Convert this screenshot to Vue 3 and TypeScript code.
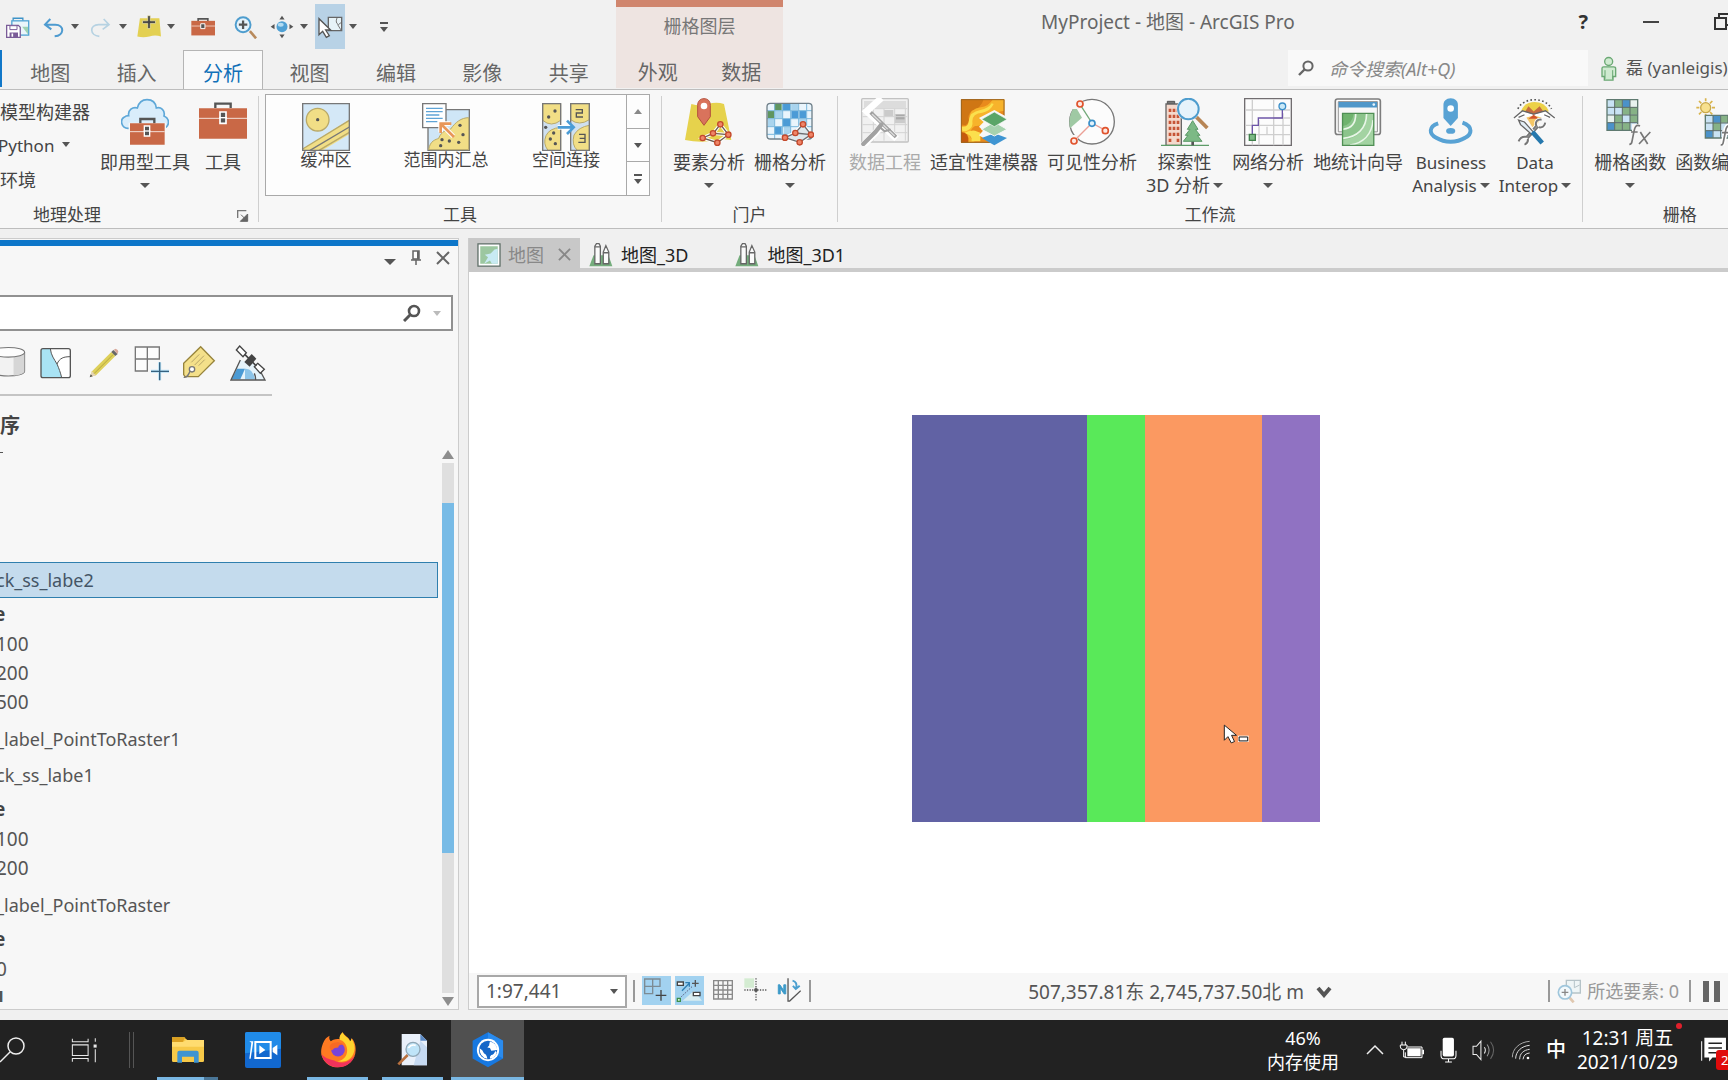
<script setup lang="ts">
import { ref } from 'vue'

interface RibbonItem {
  icon: string
  lines: string[]
  caret?: 'below' | 'inline'
  disabled?: boolean
  latin?: boolean
}

interface TreeRow {
  text: string
  kind: 'layer' | 'head' | 'value' | 'tail'
  selected?: boolean
}

const tabs = ['地图', '插入', '分析', '视图', '编辑', '影像', '共享']
const contextTabs = ['外观', '数据']
const activeTab = ref('分析')
const scale = ref('1:97,441')

const portal: RibbonItem[] = [
  { icon: 'feature', lines: ['要素分析'], caret: 'below' },
  { icon: 'rasterAnalysis', lines: ['栅格分析'], caret: 'below' },
]
const workflow: RibbonItem[] = [
  { icon: 'engineering', lines: ['数据工程'], disabled: true },
  { icon: 'suitability', lines: ['适宜性建模器'] },
  { icon: 'visibility', lines: ['可见性分析'] },
  { icon: 'explore3d', lines: ['探索性', '3D 分析'], caret: 'inline' },
  { icon: 'network', lines: ['网络分析'], caret: 'below' },
  { icon: 'geostat', lines: ['地统计向导'] },
  { icon: 'business', lines: ['Business', 'Analysis'], caret: 'inline', latin: true },
  { icon: 'interop', lines: ['Data', 'Interop'], caret: 'inline', latin: true },
]
const raster: RibbonItem[] = [
  { icon: 'rasterFx', lines: ['栅格函数'], caret: 'below' },
  { icon: 'fxEditor', lines: ['函数编辑器'] },
]
const readyTools: RibbonItem[] = [
  { icon: 'cloudTools', lines: ['即用型工具'], caret: 'below' },
  { icon: 'tools', lines: ['工具'] },
]
const groups = [
  { name: '门户', items: portal },
  { name: '工作流', items: workflow },
  { name: '栅格', items: raster },
]
const gallery = [
  { icon: 'buffer', name: '缓冲区' },
  { icon: 'summarize', name: '范围内汇总' },
  { icon: 'join', name: '空间连接' },
]

const rows: TreeRow[] = [
  { text: 'ck_ss_labe2', kind: 'layer', selected: true },
  { text: 'e', kind: 'head' },
  { text: '100', kind: 'value' },
  { text: '200', kind: 'value' },
  { text: '500', kind: 'value' },
  { text: '_label_PointToRaster1', kind: 'layer' },
  { text: 'ck_ss_labe1', kind: 'layer' },
  { text: 'e', kind: 'head' },
  { text: '100', kind: 'value' },
  { text: '200', kind: 'value' },
  { text: '_label_PointToRaster', kind: 'layer' },
  { text: 'e', kind: 'head' },
  { text: '0', kind: 'value' },
  { text: 'ı', kind: 'tail' },
]

const bands = [
  { color: '#6162a4', share: 175 },
  { color: '#59e959', share: 58 },
  { color: '#fb9961', share: 117 },
  { color: '#9072c2', share: 58 },
]

const docTabs = ['地图_3D', '地图_3D1']

const glyphs: Record<string, { box: string; body: string }> = {
  save: {
    box: '18 42 74 74',
    body: '<path d="M40 60v-8h30v8" fill="none" stroke="#3e93c8" stroke-width="4"/><rect x="36" y="60" width="52" height="44" fill="#eaf6fb" stroke="#4ea3d4" stroke-width="4"/><path d="M68 78l18 24V78z" fill="#9fd3b4"/><path d="M20 74h36l6 6v31H20z" fill="#fff" stroke="#7a5c98" stroke-width="4"/><path d="M30 75h22v12H30z" fill="#fff" stroke="#7a5c98" stroke-width="3"/><path d="M29 96h26v14H29z" fill="#7a5c98"/><path d="M35 99h5v10h-5z" fill="#fff"/>',
  },
  undo: {
    box: '126 44 72 72',
    body: '<path d="M154 56L138 73l19 14M139 73h30c28 1 28 32-2 35" fill="none" stroke="#4e9bd0" stroke-width="6"/>',
  },
  redo: {
    box: '270 44 72 72',
    body: '<path d="M314 56l16 17-19 14M329 73h-30c-28 1-28 32 2 35" fill="none" stroke="#b6d2e2" stroke-width="5"/>',
  },
  addData: {
    box: '413 44 74 74',
    body: '<path d="M422 54h60l5 56q-18-6-36 0-18 5-37 0z" fill="#e3d052"/><path d="M446 46h8v16h16v8h-16v16h-8V70h-16v-8h16z" fill="#444" stroke="#f5ecb0" stroke-width="2"/>',
  },
  toolbox: {
    box: '575 44 74 74',
    body: '<path d="M597 64v-8h30v8" fill="none" stroke="#555" stroke-width="5"/><path d="M576 62h73v45h-73z" fill="#c96846"/><path d="M576 78h73" stroke="#f0c7b8" stroke-width="3"/><path d="M605 71h13v15h-13z" fill="#555" stroke="#fff" stroke-width="3"/>',
  },
  zoomIn: {
    box: '700 42 74 74',
    body: '<path d="M749 92l19 22" stroke="#b88a5c" stroke-width="8"/><circle cx="728" cy="72" r="23" fill="#e6f3fb" stroke="#4e9dce" stroke-width="6"/><path d="M728 59v26M715 72h26" stroke="#555" stroke-width="7"/>',
  },
  explore: {
    box: '809 44 74 74',
    body: '<circle cx="846" cy="80" r="17" fill="#4fa0d4"/><ellipse cx="842" cy="74" rx="9" ry="6" fill="#b3dcf2"/><path d="M846 46l8 12h-16zM846 116l8-12h-16zM811 80l12-8v16zM881 80l-12-8v16z" fill="#555"/>',
  },
  select: {
    box: '950 38 78 78',
    body: '<path d="M984 48h40v40h-40z" fill="#e7f3f8" stroke="#666" stroke-width="4"/><path d="M1010 50q-6 14 4 20l8-6M1012 70l10 16" fill="none" stroke="#777" stroke-width="3"/><path d="M956 52v48l11-10 11 18 9-5-11-17h15z" fill="#fff" stroke="#555" stroke-width="4"/>',
  },
  cloudTools: {
    box: '363 294 144 144',
    body: '<path d="M384 385c-20-1-25-25-12-33 6-5 14-5 14-5-3-17 12-27 26-23 4-15 14-25 29-25s26 9 28 25c14-4 27 7 23 24 12 5 14 15 13 22-2 11-11 14-18 14z" fill="#d9edfb" stroke="#5fa8d8" stroke-width="5"/><path d="M386 368h112v68H386z" fill="#f7f7f7"/><path d="M421 370v-13h42v13" fill="none" stroke="#555" stroke-width="7"/><path d="M390 370h104v64H390z" fill="#c96846"/><path d="M390 395h104" stroke="#f3e0d8" stroke-width="3"/><path d="M433 378h16v30h-16z" fill="#555" stroke="#fff" stroke-width="4"/><path d="M431 393h20" stroke="#fff" stroke-width="4"/>',
  },
  tools: {
    box: '597 294 144 144',
    body: '<path d="M646 324v-13h46v13" fill="none" stroke="#555" stroke-width="7"/><path d="M597 325h144v91H597z" fill="#c96846"/><path d="M597 355h144" stroke="#f3e0d8" stroke-width="3"/><path d="M660 336h18v34h-18z" fill="#555" stroke="#fff" stroke-width="5"/><path d="M657 353h24" stroke="#fff" stroke-width="4"/>',
  },
  buffer: {
    box: '909 309 144 144',
    body: '<path d="M911 311h140v140H911z" fill="#d4e8f7"/><circle cx="956" cy="359" r="34" fill="#f1de86" stroke="#b9a968" stroke-width="4"/><circle cx="956" cy="359" r="5" fill="#555"/><path d="M911 451v-4l140-88v44l-80 48z" fill="#f1de86"/><path d="M911 447l140-86M960 451l91-54" stroke="#b9a968" stroke-width="4"/><path d="M933 451l118-70" stroke="#777" stroke-width="4"/><path d="M911 311h140v140H911z" fill="none" stroke="#777" stroke-width="4"/>',
  },
  summarize: {
    box: '0 0 144 144',
    body: '<path d="M18 20h124v122H18z" fill="#cfe6f7" stroke="#777" stroke-width="4"/><path d="M20 140c4-28 22-30 30-34 10-24 22-22 36-28 14-20 32-34 54-34v96z" fill="#f1de86" stroke="#b9a968" stroke-width="3"/><path d="M2 2h70v72H2z" fill="#fff" stroke="#777" stroke-width="4"/><path d="M12 16h50M12 26h50M12 36h40M12 46h50M12 56h34" stroke="#5fa4d6" stroke-width="4"/><path d="M94 100L60 66M56 88V62h28" fill="none" stroke="#fff" stroke-width="14"/><path d="M96 102L60 66M56 90V62h32" fill="none" stroke="#e8975a" stroke-width="8"/><g fill="#555"><circle cx="114" cy="67" r="5"/><circle cx="123" cy="95" r="5"/><circle cx="60" cy="110" r="5"/><circle cx="82" cy="114" r="5"/><circle cx="110" cy="118" r="5"/><circle cx="56" cy="128" r="5"/></g>',
  },
  join: {
    box: '339 309 144 144',
    body: '<path d="M341 311h54v140h-54zM425 311h56v140h-56z" fill="#cfe0f0"/><path d="M341 311h54v50q-28 22-54 0zM395 382v69h-38q-16-20-6-44 10-22 44-25zM425 311h56v48q-30 20-56 0zM481 376v75h-36q-18-16-10-46 14-24 46-29z" fill="#f1de86" stroke="#b9a968" stroke-width="3"/><path d="M341 311h54v140h-54zM425 311h56v140h-56z" fill="none" stroke="#777" stroke-width="4"/><path d="M440 329h20v10h-18v12h20M450 403h18v24h-20M452 415h16" fill="none" stroke="#555" stroke-width="4"/><path d="M386 382h42" stroke="#fff" stroke-width="14"/><path d="M386 382h46M414 362l20 20-20 20" fill="none" stroke="#4b9cd6" stroke-width="8"/><g fill="#555"><circle cx="378" cy="333" r="5"/><circle cx="359" cy="351" r="5"/><circle cx="350" cy="382" r="5"/><circle cx="374" cy="399" r="5"/><circle cx="364" cy="417" r="5"/><circle cx="379" cy="431" r="5"/></g>',
  },
  feature: {
    box: '767 294 144 144',
    body: '<path d="M786 312q26 8 50 0 26-8 48 0l22 108q-34-6-68 4-34 4-71-4z" fill="#e6d24c"/><path d="M824 296c12 0 19 8 19 20v34l-19 26-19-26v-34c0-12 7-20 19-20z" fill="#d9735c" stroke="#b4503c" stroke-width="3"/><circle cx="824" cy="318" r="10" fill="#fff"/><path d="M820 414l32-14 21-27 24 31-33 24zM852 400l45 4" fill="none" stroke="#fff" stroke-width="10"/><path d="M820 414l32-14 21-27 24 31-33 24zM852 400l45 4" fill="none" stroke="#6c5d50" stroke-width="4"/><g fill="#ef8568" stroke="#c4492c" stroke-width="4"><circle cx="820" cy="414" r="8"/><circle cx="851" cy="400" r="8"/><circle cx="873" cy="373" r="8"/><circle cx="897" cy="404" r="8"/><circle cx="864" cy="428" r="8"/></g>',
  },
  rasterAnalysis: {
    box: '1008 294 144 144',
    body: '<rect x="1011" y="310" width="135" height="107" rx="10" fill="#eaf5fc"/><path d="M1013 333h20v22h-20zM1033 311h22v20h-22z" fill="#5f9560"/><path d="M1058 311h22v20h-22zM1084 333h20v22h-20zM1058 357h22v22h-22zM1033 380h22v22h-22zM1108 333h20v22h-20z" fill="#4b9bd6"/><path d="M1084 311h20v20h-20zM1034 333h22v22h-22zM1108 357h20v20h-20zM1013 357h20v22h-20zM1062 381h20v22h-20z" fill="#a9d4ee"/><path d="M1034 311v106M1058 311v106M1082 311v106M1106 311v106M1130 311v106M1011 332h135M1011 356h135M1011 380h135M1011 403h135" stroke="#79b7dc" stroke-width="3"/><rect x="1011" y="310" width="135" height="107" rx="10" fill="none" stroke="#70808a" stroke-width="4"/><path d="M1065 413l31-14 23-26 24 31-34 23zM1096 399l47 5" fill="none" stroke="#fff" stroke-width="11"/><path d="M1065 413l31-14 23-26 24 31-34 23zM1096 399l47 5" fill="#dfe8ec" stroke="#6c6d70" stroke-width="4"/><g fill="#ef8568" stroke="#c4492c" stroke-width="4"><circle cx="1065" cy="413" r="8"/><circle cx="1096" cy="399" r="8"/><circle cx="1119" cy="373" r="8"/><circle cx="1143" cy="404" r="8"/><circle cx="1109" cy="427" r="8"/></g>',
  },
  engineering: {
    box: '63 294 144 144',
    body: '<rect x="65" y="296" width="140" height="130" rx="3" fill="#f1f1f1" stroke="#c2c2c2" stroke-width="4"/><path d="M72 303h126v22H72z" fill="#dcdcdc"/><path d="M132 330h28v20h-28zM164 342h32v28h-32z" fill="#cbcbcb"/><path d="M168 344h26v14h-26z" fill="#a9a9a9"/><path d="M100 326v96M132 326v96M164 326v96M196 326v96M68 326h134M68 350h134M68 374h134M68 398h134" stroke="#d3d3d3" stroke-width="3"/><path d="M124 294L80 334l90 82M124 380l-52 54" fill="none" stroke="#fff" stroke-width="20"/><path d="M92 337l76 74" stroke="#a0a0a0" stroke-width="11"/><path d="M96 342l68 66" stroke="#dcdcdc" stroke-width="4"/><path d="M124 374l-18 22-36 36" fill="none" stroke="#a2a2a2" stroke-width="13" stroke-linecap="round"/><path d="M118 380l16 14 18-6" stroke="#a0a0a0" stroke-width="6" fill="none"/>',
  },
  suitability: {
    box: '361 294 144 144',
    body: '<path d="M364 298h130v130H364z" fill="#e98a1c"/><path d="M364 298h68q-8 28-36 34-14 14-8 30-8 20-24 10z" fill="#cf7614"/><path d="M494 298v34q-26 2-48 22-10 26-40 24-16 8-14 32 4 12 20 18h-48v-50q26 6 24-22 2-30 36-34 22-2 36-24z" fill="#f7b32b"/><path d="M462 312q-10 22-34 26-30 2-30 26 4 20-16 28-10 4-16-2v-10q20 4 22-20 2-24 34-30 24-4 34-20zM372 400q18-10 34-8l16 6v26h-26q2-22-24-24z" fill="#fbe04d"/><path d="M364 396q26 0 22 32h-22z" fill="#c5590d"/><path d="M365 299h128v128H365z" fill="none" stroke="#9c6420" stroke-width="3"/><path d="M464 330l48 26-12 12 12 14-12 10 12 12v32h-46l-48-30 12-14-12-12 14-14-14-12z" fill="#f7f7f7"/><path d="M464 400l38 14-38 22-38-22z" fill="#3f95d2"/><path d="M464 366l38 22-38 20-38-20z" fill="#a6d2ae" stroke="#f7f7f7" stroke-width="3"/><path d="M464 336l38 22-38 22-38-22z" fill="#5aa567" stroke="#f7f7f7" stroke-width="2"/>',
  },
  visibility: {
    box: '682 293 144 144',
    body: '<circle cx="754" cy="364" r="67" fill="#fcfcfc" stroke="#777" stroke-width="4"/><path d="M704 318l20 34-36 32q-8-40 16-66z" fill="#9fc9a4"/><path d="M690 300h30v26h-30zM682 404h30v28h-30z" fill="#f7f7f7"/><path d="M718 312l36 56" stroke="#71a878" stroke-width="4"/><path d="M754 368l40 22M754 368l-54 54" stroke="#eba096" stroke-width="4"/><circle cx="754" cy="369" r="9" fill="#e3f3fc" stroke="#3b8fc9" stroke-width="5"/><g fill="#fce8e2" stroke="#e0532d" stroke-width="5"><circle cx="718" cy="311" r="9"/><circle cx="700" cy="422" r="9"/><circle cx="794" cy="391" r="9"/></g>',
  },
  explore3d: {
    box: '963 294 144 144',
    body: '<path d="M982 312v-8h22v8z" fill="#777" stroke="#555" stroke-width="3"/><path d="M978 312h46v124h-46z" fill="#f4d9cd" stroke="#666" stroke-width="4"/><g fill="#c65436"><path d="M986 326h8v10h-8zM998 326h8v10h-8zM1010 326h8v10h-8zM986 344h8v10h-8zM998 344h8v10h-8zM1010 344h8v10h-8zM986 362h8v10h-8zM998 362h8v10h-8zM1010 362h8v10h-8zM986 380h8v10h-8zM998 380h8v10h-8zM1010 380h8v10h-8zM986 398h8v10h-8zM998 398h8v10h-8zM1010 398h8v10h-8zM986 416h8v10h-8zM1010 416h8v10h-8z"/></g><path d="M963 436h144" stroke="#5d9b68" stroke-width="4"/><path d="M1058 420v16" stroke="#555" stroke-width="8"/><path d="M1058 362l16 26h-8l14 18h-8l14 18h-56l14-18h-8l14-18h-8z" fill="#7cb985" stroke="#5d9b68" stroke-width="3"/><path d="M1068 350l34 34" stroke="#b78555" stroke-width="11"/><circle cx="1045" cy="327" r="35" fill="#f7f7f7"/><circle cx="1045" cy="327" r="31" fill="#e6f3fb" stroke="#4e9dce" stroke-width="6"/>',
  },
  network: {
    box: '1215 294 144 144',
    body: '<path d="M1217 296h140v140h-140z" fill="#fcfcfc" stroke="#716d70" stroke-width="4"/><path d="M1240 298v138M1260 360v76M1304 298v138M1332 340v96M1284 380v26M1219 330h136M1219 376h136M1219 404h136M1304 354h51" stroke="#cfcfcf" stroke-width="4"/><path d="M1240 410v-34h18v-22h72v-32" fill="none" stroke="#6d55a8" stroke-width="4"/><circle cx="1330" cy="319" r="10" fill="#c9e9f8" stroke="#3b8fc9" stroke-width="4"/><path d="M1231 403h18v18h-18z" fill="#7cb985" stroke="#3f7f4a" stroke-width="4"/>',
  },
  geostat: {
    box: '200 293 144 146',
    body: '<rect x="203" y="296" width="137" height="108" rx="7" fill="#fff" stroke="#7d7d7d" stroke-width="5"/><path d="M212 304h119v92H212z" fill="#f7f7f7" stroke="#8f8f8f" stroke-width="3"/><path d="M213 305h117v17H213z" fill="#4f97c9"/><circle cx="320" cy="313" r="4" fill="#e8f5fc"/><path d="M225 340h95v97h-95z" fill="#a3d3a2"/><path d="M225 340h74c0 52-32 78-74 80z" fill="#8bc48b"/><path d="M225 340h34q-4 34-34 38z" fill="#6fb36e"/><path d="M265 342c0 28-14 44-38 46M298 342c0 44-28 70-72 74M318 360c-4 44-30 70-70 76" fill="none" stroke="#e9f6e8" stroke-width="5"/><path d="M225 340h95v97h-95z" fill="none" stroke="#4f8f54" stroke-width="4"/>',
  },
  business: {
    box: '479 293 144 146',
    body: '<path d="M586 368c34 12 28 36 8 46-26 16-62 16-88 0-22-12-24-34 6-44" fill="none" stroke="#58a2d4" stroke-width="12"/><path d="M550 294c14 0 22 9 22 20v40l-22 24-22-24v-40c0-11 8-20 22-20z" fill="#58a2d4"/><circle cx="550" cy="325" r="10" fill="#fff"/><ellipse cx="550" cy="393" rx="14" ry="9" fill="#58a2d4"/>',
  },
  interop: {
    box: '732 293 144 146',
    body: '<path d="M752 326c16-36 84-38 102 0" fill="none" stroke="#555" stroke-width="5" stroke-dasharray="5 7"/><path d="M762 334c8-38 72-38 84 0l-42 4z" fill="#ecd148"/><path d="M772 338l12-20 16 16 18-16 14 20-14 8h-30z" fill="#c46b40"/><path d="M738 356l28-24 34 12 36-12 30 24-32-4-34 4-30-4z" fill="#fff"/><path d="M740 354l26-22 34 10 36-10 28 22M754 352l18-8M850 352l-18-8" fill="none" stroke="#666" stroke-width="4"/><path d="M778 352l22 36 24-36-24-6z" fill="#f5c766"/><path d="M784 356l16-12 16 12z" fill="#d2532c"/><path d="M824 358c-14-2-20 8-16 18l-32 36c-10-2-18 2-22 12M772 436c10-4 14-12 12-20l32-34c8 4 18-2 20-12" fill="none" stroke="#fff" stroke-width="10"/><path d="M824 359c-14-2-20 8-16 18l-30 34c-12-2-20 4-24 14M772 435c8-4 12-10 10-18M816 382c10 2 18-4 19-14M814 380l-32 36" fill="none" stroke="#777" stroke-width="6"/><path d="M756 364l14 4 32 34" fill="none" stroke="#fff" stroke-width="13"/><path d="M754 360l18 6 30 34-8 4-34-30z" fill="#e3eef6" stroke="#666" stroke-width="4"/><path d="M796 396l30 34" stroke="#2678ad" stroke-width="14"/>',
  },
  rasterFx: {
    box: '1016 294 144 144',
    body: '<path d="M1019 299h92v92h-92z" fill="#c9e3f4"/><path d="M1042 299h22v22h-22zM1066 322h22v22h-22zM1088 322h22v22h-22zM1042 345h22v22h-22zM1088 345h22v22h-22zM1042 368h22v22h-22zM1066 368h22v22h-22z" fill="#86b286"/><path d="M1066 299h22v22h-22zM1019 368h22v22h-22z" fill="#4b92c9"/><path d="M1088 299h22v22h-22zM1019 345h22v22h-22z" fill="#e8f2ee"/><path d="M1042 299v92M1065 299v92M1088 299v92M1019 322h92M1019 345h92M1019 368h92" stroke="#5b6a66" stroke-width="3"/><path d="M1019 299h92v92h-92z" fill="none" stroke="#5f7a70" stroke-width="4"/><path d="M1094 372h26v30h-26z" fill="#f7f7f7"/><path d="M1118 378c-12-6-16 4-18 16l-6 30c-1 8-4 9-8 9M1091 396h20M1119 396l22 36M1149 396l-34 36" fill="none" stroke="#777" stroke-width="5"/>',
  },
  fxEditor: {
    box: '1284 294 144 144',
    body: '<circle cx="1313" cy="323" r="15" fill="#f7e08e" stroke="#c9a94c" stroke-width="4"/><path d="M1313 295v9M1313 342v9M1285 323h9M1332 323h9M1293 303l7 7M1333 303l-7 7M1293 343l7-7M1333 343l-7-7" stroke="#d9b44c" stroke-width="5"/><path d="M1312 346h92v68h-92z" fill="#c9e3f4"/><path d="M1335 369h22v22h-22zM1358 346h22v22h-22zM1380 369h22v22h-22z" fill="#86b286"/><path d="M1312 392h22v22h-22zM1335 346h22v22h-22z" fill="#4b92c9"/><path d="M1335 346v68M1358 346v68M1380 346v68M1312 369h92M1312 392h92" stroke="#5b6a66" stroke-width="3"/><path d="M1312 346h92v68h-92z" fill="none" stroke="#5f7a70" stroke-width="4"/><path d="M1392 380c-14-8-18 2-20 16l-6 30c-1 8-5 10-8 8M1362 398h22" fill="none" stroke="#fff" stroke-width="14"/><path d="M1392 380c-14-8-18 2-20 16l-6 30c-1 8-5 10-8 8M1362 398h22" fill="none" stroke="#777" stroke-width="5"/>',
  },
  search: {
    box: '0 0 16 16',
    body: '<circle cx="10" cy="6" r="4.600" fill="none" stroke="#666" stroke-width="2"/><path d="M7 9l-6 6" stroke="#666" stroke-width="2.400"/>',
  },
  searchBold: {
    box: '0 0 18 18',
    body: '<circle cx="11" cy="7" r="5" fill="none" stroke="#555" stroke-width="2.600"/><path d="M8 10l-7 7" stroke="#555" stroke-width="3"/>',
  },
  person: {
    box: '1000 166 48 74',
    body: '<circle cx="1023" cy="182" r="12" fill="#cfead0" stroke="#6aa873" stroke-width="4"/><path d="M1003 202q0-4 5-4h30q6 0 6 5v24h-8v11h-26v-11h-7z" fill="#cfead0" stroke="#6aa873" stroke-width="4"/><path d="M1012 208v26M1035 208v26" stroke="#6aa873" stroke-width="3"/>',
  },
  cylinder: {
    box: '-32 350 104 104',
    body: '<path d="M-26 370v56c0 18 94 18 94 0v-56" fill="#f2f2f2" stroke="#777" stroke-width="3"/><path d="M36 384l31-10v54q-10 10-31 10z" fill="#d6d6d6"/><ellipse cx="21" cy="371" rx="47" ry="14" fill="#fdfdfd" stroke="#777" stroke-width="3"/>',
  },
  mapPart: {
    box: '121 350 96 96',
    body: '<rect x="124" y="355" width="88" height="87" rx="6" fill="#fff"/><path d="M130 355h22c2 20 12 32 20 46 6 14 10 24 14 41h-56q-6 0-6-6v-75q0-6 6-6z" fill="#a9e3f4"/><path d="M152 355c2 20 12 32 20 46 6 14 10 24 14 41M172 401c8-18 20-22 40-22" fill="none" stroke="#555" stroke-width="3"/><rect x="124" y="355" width="88" height="87" rx="6" fill="none" stroke="#555" stroke-width="4"/>',
  },
  pencil: {
    box: '264 350 96 96',
    body: '<path d="M270 440l6-17 58-58 12 12-58 58z" fill="#ded05a"/><path d="M270 440l6-17 12 12z" fill="#e6d5b8"/><path d="M269 441l3-9 6 6z" fill="#555"/><path d="M334 365l6-6 13 12-7 6z" fill="#666"/><path d="M341 358l6-3q8 3 8 9l-3 7z" fill="#d8a89a"/><path d="M282 430l58-58" stroke="#b7a93f" stroke-width="3"/>',
  },
  gridAdd: {
    box: '404 346 108 108',
    body: '<path d="M408 352h72v36h-36v36h-36zM444 352v36M408 388h36" fill="#fcfcfc" stroke="#777" stroke-width="4"/><path d="M481 398v54M455 425h54" stroke="#b8e0f5" stroke-width="9"/><path d="M481 398v54M455 425h54" stroke="#35617f" stroke-width="4"/>',
  },
  tag: {
    box: '550 346 108 108',
    body: '<path d="M606 351l41 42-48 48h-40l-4-6v-34z" fill="#f4e08a" stroke="#97843c" stroke-width="4"/><path d="M578 398l24-24M588 406l28-28M600 408l18-18" stroke="#b7a568" stroke-width="3"/><circle cx="580" cy="419" r="8" fill="#fff" stroke="#777" stroke-width="4"/><path d="M574 425c-4 10-8 20-19 18" fill="none" stroke="#777" stroke-width="4"/>',
  },
  satellite: {
    box: '691 347 108 108',
    body: '<path d="M722 392l-28 60h102l-24-46-26-6z" fill="#e6f3fa"/><path d="M712 418h24l-14 32h-26z" fill="#4a9ad4"/><path d="M736 418q24-2 30 32h-30z" fill="#8cc4e8"/><path d="M722 392l-28 60h102l-16-30M764 432q4 8 4 20" fill="none" stroke="#555" stroke-width="4"/><path d="M720 350l20 20-10 12-20-20zM774 402l20 18-12 12-18-20z" fill="#fff" stroke="#444" stroke-width="4"/><path d="M736 376l34 34" stroke="#444" stroke-width="5"/><path d="M756 374l14 14-20 24-16-14z" fill="#444"/>',
  },
  mapDoc: {
    box: '80 38 74 74',
    body: '<path d="M83 41h68v68H83z" fill="#fff" stroke="#5f6f68" stroke-width="4"/><path d="M90 48h54v54H90z" fill="#9cc7a0"/><path d="M144 56v46h-18l-6-10-18 10 12-20-10-8 18-4 12-12z" fill="#c8eaf3"/>',
  },
  sceneDoc: {
    box: '416 38 74 74',
    body: '<path d="M430 76h46l12 34h-71z" fill="#74ad7c"/><path d="M434 102V48l5-8h8l4 8v54zM460 102V66l8-20 9 20v36z" fill="#fbfbfb" stroke="#666" stroke-width="4"/><path d="M434 50h17M460 68h17" stroke="#666" stroke-width="4"/>',
  },
  snapA: {
    box: '606 78 87 87',
    body: '<path d="M614 87h46v22h-22v22h-24zM638 87v22M614 109h24" fill="none" stroke="#7d8b93" stroke-width="4"/><path d="M663 120v32M647 136h32" stroke="#444" stroke-width="4"/>',
  },
  snapB: {
    box: '705 78 87 87',
    body: '<path d="M728 152l34-30 24 30z" fill="#d8ecf0"/><path d="M712 96h18v10h-18zM760 127h20v10h-20z" fill="#fff" stroke="#444" stroke-width="4"/><path d="M766 90v20M756 100h20" stroke="#555" stroke-width="4"/><path d="M726 122l22-22M736 98h12v12" fill="none" stroke="#2f7fb5" stroke-width="4"/><path d="M724 140l32-30" stroke="#557" stroke-width="3" stroke-dasharray="4 4"/><path d="M712 145h9v9h-9z" fill="#d7f0d8" stroke="#3f8f4a" stroke-width="4"/>',
  },
  table: {
    box: '810 87 66 66',
    body: '<path d="M815 92h56v55h-56zM829 92v55M843 92v55M857 92v55M815 106h56M815 120h56M815 133h56" fill="none" stroke="#8a8a8a" stroke-width="4"/>',
  },
  crosshair: {
    box: '908 84 74 74',
    body: '<path d="M909 85h30v29h-30z" fill="#d4ecd2"/><path d="M945 85v72M909 121h72" stroke="#555" stroke-width="4" stroke-dasharray="4 4"/><circle cx="945" cy="121" r="6" fill="#555"/>',
  },
  north: {
    box: '1006 84 74 74',
    body: '<path d="M1010 133v-28h5l12 18v-18h6v28h-5l-12-18v18z" fill="#3d9ac9" stroke="#3d9ac9" stroke-width="3"/><path d="M1040 85v70h5l34-32" fill="none" stroke="#555" stroke-width="4"/><path d="M1054 92q16 4 11 24M1055 108l9 10 12-10" fill="none" stroke="#4a9fcf" stroke-width="6"/>',
  },
  selection: {
    box: '0 0 72 72',
    body: '<path d="M28 4h42v38H28z" fill="#eef5f6" stroke="#b5c3c8" stroke-width="4"/><path d="M52 6v20l16-8" fill="none" stroke="#b5c3c8" stroke-width="3"/><path d="M36 54l14 16" stroke="#e0c8b0" stroke-width="8"/><circle cx="24" cy="40" r="20" fill="#f2f9fc" stroke="#9fc6dc" stroke-width="5"/><path d="M24 30v20M14 40h20" stroke="#888" stroke-width="4"/>',
  },
  taskSearch: {
    box: '0 0 26 26',
    body: '<circle cx="16" cy="9" r="8" fill="none" stroke="#eee" stroke-width="1.500"/><path d="M10 15L0 25" stroke="#eee" stroke-width="1.500"/>',
  },
  taskView: {
    box: '213 950 76 76',
    body: '<path d="M217 955v9h46v-9M217 1022v-9h46v9M217 973h46v31h-46zM284 954v10M284 986v38" fill="none" stroke="#e8e8e8" stroke-width="3"/><path d="M279 972h9v9h-9z" fill="#e8e8e8"/>',
  },
  folder: {
    box: '510 936 108 108',
    body: '<path d="M516 952h36l10 8h46q4 0 4 4v58q0 4-4 4h-88q-4 0-4-4z" fill="#f7c948"/><path d="M516 952h40l-8 14h-32z" fill="#dba021"/><path d="M516 966h34l8-6h54v20h-96z" fill="#ffdc70"/><path d="M532 1028v-30q0-6 6-6h52q6 0 6 6v30h-14v-18h-36v18z" fill="#3f94d1"/>',
  },
  video: {
    box: '735 936 108 108',
    body: '<rect x="735" y="936" width="108" height="108" rx="6" fill="#1268cf"/><path d="M741 936h96q6 0 6 6v44L735 1000v-58q0-6 6-6z" fill="#208be8"/><path d="M766 966h46v48h-46z" fill="none" stroke="#fff" stroke-width="6"/><path d="M778 976l18 14-18 12zM818 984l14-10v32l-14-10zM748 964h12l-8 52h-4l6-48z" fill="#fff"/>',
  },
  firefox: {
    box: '960 936 106 106',
    body: '<path d="M1027 937c-8 6-10 14-9 20-14-2-22 4-26 6-4-4-6-8-4-16-8 4-14 10-17 18-8 16-10 34-4 46 8 18 24 29 45 29 30 0 52-20 53-50 1-16-6-30-12-36 0 6-2 8-4 10-4-14-18-16-22-27z" fill="#ff7a22"/><path d="M1027 937c-8 6-10 14-9 22 10 2 22 14 22 30 0 18-10 30-28 33 28 6 48-10 50-38 0-14-6-24-10-29 0 6-2 8-4 8-4-12-18-14-21-26z" fill="#ffd42e"/><path d="M964 1000c6 24 24 40 48 40 26 0 42-14 50-34-16 20-40 26-60 14-16-4-30-8-38-20z" fill="#f2325c"/><circle cx="1013" cy="988" r="20" fill="#7a44d8"/><path d="M992 972c12-8 28-8 38 2-14-2-16 4-16 8-8 0-14 2-18 8-8-2-10-10-4-18z" fill="#f86a25"/>',
  },
  docSearch: {
    box: '1184 934 108 108',
    body: '<path d="M1204 940h56l20 20v74h-76z" fill="#e9f0fa"/><path d="M1260 940l20 20h-20z" fill="#5a89c4"/><path d="M1260 960l20 20v54h-40z" fill="#c6daf2"/><path d="M1222 1003l-28 28" stroke="#b9713f" stroke-width="8"/><circle cx="1238" cy="986" r="21" fill="#bfe4f8" stroke="#8fa6b5" stroke-width="4"/><path d="M1224 982q8-12 22-8" stroke="#fff" stroke-width="5" fill="none"/>',
  },
  arcgis: {
    box: '90 246 108 110',
    body: '<path d="M144 247l46 26v54l-46 27-47-27v-54z" fill="#1778e0"/><path d="M144 247l46 26v54l-46-26z" fill="#2a8bee"/><circle cx="144" cy="301" r="34" fill="#fff"/><circle cx="144" cy="301" r="28" fill="#1466c8"/><path d="M150 275q22 6 22 26l-18 2-4-8-8-2q8-6 6-10zM118 296q10 4 14 16 8 2 10 16-24-4-24-32zM170 308q-2 16-20 20-2-8 4-12 8 0 12-12z" fill="#fff"/>',
  },
  chevUp: { box: '0 0 18 12', body: '<path d="M1 10l8-8 8 8" fill="none" stroke="#eee" stroke-width="1.500"/>' },
  battery: {
    box: '502 90 76 54',
    body: '<path d="M526 108h44v32h-50v-16" fill="none" stroke="#fff" stroke-width="3"/><path d="M526 112h40v24h-40zM571 116h5v14h-5z" fill="#fff"/><path d="M510 92v10M520 92v10M505 102h20v6q-1 8-10 8t-10-8zM515 116v22h8" fill="none" stroke="#fff" stroke-width="3"/>',
  },
  mic: {
    box: '622 82 50 76',
    body: '<rect x="630" y="84" width="33" height="55" rx="5" fill="#fff"/><path d="M625 122v14q0 10 10 10h24q10 0 10-10v-14M647 146v9M637 155h20" fill="none" stroke="#fff" stroke-width="3"/>',
  },
  speaker: {
    box: '722 88 70 64',
    body: '<path d="M725 109h10l13-15v54l-13-15h-10z" fill="none" stroke="#eee" stroke-width="3"/><path d="M758 112q6 8 0 18" fill="none" stroke="#eee" stroke-width="3"/><path d="M766 104q12 16 0 34" fill="none" stroke="#999" stroke-width="3"/><path d="M776 96q18 24 0 50" fill="none" stroke="#666" stroke-width="3"/>',
  },
  wifi: {
    box: '838 92 60 60',
    body: '<path d="M842 144c0-26 22-46 52-48" fill="none" stroke="#aaa" stroke-width="3"/><path d="M852 148c0-22 18-38 42-40M864 150c0-18 12-28 30-30M874 150c2-12 8-18 20-19" fill="none" stroke="#ddd" stroke-width="3"/><circle cx="889" cy="146" r="4" fill="#fff"/>',
  },
  notice: {
    box: '1412 80 80 76',
    body: '<path d="M1414 92v58" stroke="#fff" stroke-width="3"/><path d="M1422 82h64v58h-40l-10 12v-12h-14z" fill="#fff"/><path d="M1434 98h40M1434 112h40M1434 126h24" stroke="#222" stroke-width="4"/>',
  },
  pin: {
    box: '0 0 12 16',
    body: '<path d="M3 1h6v8H3z" fill="#fff" stroke="#666" stroke-width="1.500"/><path d="M7 1h2v8H7z" fill="#666"/><path d="M1 10h10M6 10v5" stroke="#666" stroke-width="1.500"/>',
  },
  cross: { box: '0 0 14 14', body: '<path d="M1 1l12 12M13 1L1 13" stroke="#666" stroke-width="2"/>' },
  launcher: {
    box: '714 626 36 36',
    body: '<path d="M716 650v-22h26" fill="none" stroke="#777" stroke-width="4"/><path d="M746 638v22h-22zM726 640l14 14" fill="#666" stroke="#666" stroke-width="3"/>',
  },
}

const strip = ['cylinder', 'mapPart', 'pencil', 'gridAdd', 'tag', 'satellite']
const statusTools = ['snapA', 'snapB', 'table', 'crosshair', 'north']
const apps = [
  { icon: 'folder', label: '文件资源管理器', state: 'stacked' },
  { icon: 'video', label: '录屏', state: 'idle' },
  { icon: 'firefox', label: 'Firefox', state: 'open' },
  { icon: 'docSearch', label: '文档搜索', state: 'open' },
  { icon: 'arcgis', label: 'ArcGIS Pro', state: 'active' },
]
const quick = [
  { icon: 'save', caret: false, cls: 'q-save' },
  { icon: 'undo', caret: true, cls: 'q-split' },
  { icon: 'redo', caret: true, cls: 'q-split' },
  { icon: 'addData', caret: true, cls: 'q-split' },
  { icon: 'toolbox', caret: false, cls: 'q-tool' },
  { icon: 'zoomIn', caret: false, cls: 'q-zoom' },
  { icon: 'explore', caret: true, cls: 'q-split' },
]
</script>

<template>
  <div class="app">
    <header class="top">
      <div class="top-left">
        <div class="quick">
          <button v-for="q in quick" :key="q.icon" class="q" :class="q.cls" type="button">
            <svg class="i24" :viewBox="glyphs[q.icon].box" v-html="glyphs[q.icon].body"></svg>
            <i v-if="q.caret" class="caret"></i>
          </button>
          <button class="q q-on" type="button">
            <svg class="i26" :viewBox="glyphs.select.box" v-html="glyphs.select.body"></svg>
          </button>
          <button class="q q-drop" type="button"><i class="caret"></i></button>
          <button class="q q-more" type="button"><i class="bar"></i><i class="caret"></i></button>
        </div>
        <nav class="tabs">
          <span class="file"></span>
          <div class="tab-grid">
            <button
              v-for="t in tabs"
              :key="t"
              class="tab"
              :class="{ on: t === activeTab }"
              type="button"
              @click="activeTab = t"
            >{{ t }}</button>
          </div>
        </nav>
      </div>
      <div class="context">
        <span class="context-name">栅格图层</span>
        <div class="context-tabs">
          <button v-for="t in contextTabs" :key="t" class="tab" type="button">{{ t }}</button>
        </div>
      </div>
      <div class="top-right">
        <div class="title-row">
          <h1 class="title">MyProject - 地图 - ArcGIS Pro</h1>
          <div class="win">
            <button type="button" class="help">?</button>
            <button type="button" aria-label="最小化"><svg width="16" height="16" viewBox="0 0 16 16"><path d="M0 8h16" stroke="#444" stroke-width="2" /></svg></button>
            <button type="button" aria-label="还原"><svg width="18" height="18" viewBox="0 0 18 18"><path d="M1 5h11v11H1zM5 5V1h12v11h-5" fill="none" stroke="#333" stroke-width="2" /></svg></button>
          </div>
        </div>
        <div class="user-row">
          <label class="cmd">
            <svg class="i16" :viewBox="glyphs.search.box" v-html="glyphs.search.body"></svg>
            <input type="text" placeholder="命令搜索(Alt+Q)" aria-label="命令搜索" />
          </label>
          <button class="user" type="button">
            <svg class="person" :viewBox="glyphs.person.box" v-html="glyphs.person.body"></svg>
            <span>磊 (yanleigis)</span>
          </button>
        </div>
      </div>
    </header>

    <section class="ribbon">
      <div class="group">
        <div class="body">
          <div class="small-col">
            <button type="button">模型构建器</button>
            <button type="button" class="latin">Python<i class="caret"></i></button>
            <button type="button">环境</button>
          </div>
          <button v-for="b in readyTools" :key="b.icon" class="big" type="button">
            <svg class="i48" :viewBox="glyphs[b.icon].box" v-html="glyphs[b.icon].body"></svg>
            <span v-for="l in b.lines" :key="l" class="line">{{ l }}</span>
            <span v-if="b.caret" class="line"><i class="caret wide alone"></i></span>
          </button>
        </div>
        <div class="name name-first">地理处理
          <button class="launch" type="button" aria-label="选项"><svg class="i12" :viewBox="glyphs.launcher.box" v-html="glyphs.launcher.body"></svg></button>
        </div>
      </div>

      <div class="group">
        <div class="body gallery-body">
          <div class="gallery">
            <button v-for="g in gallery" :key="g.icon" class="g-item" type="button">
              <svg class="i48" :viewBox="glyphs[g.icon].box" v-html="glyphs[g.icon].body"></svg>
              <span>{{ g.name }}</span>
            </button>
            <div class="g-scroll">
              <button type="button" aria-label="上一行"><i class="caret up"></i></button>
              <button type="button" aria-label="下一行"><i class="caret"></i></button>
              <button type="button" aria-label="更多"><i class="bar"></i><i class="caret"></i></button>
            </div>
          </div>
        </div>
        <div class="name">工具</div>
      </div>

      <div v-for="g in groups" :key="g.name" class="group">
        <div class="body">
          <button v-for="b in g.items" :key="b.icon" class="big" :class="{ latin: b.latin }" :disabled="b.disabled" type="button">
            <svg class="i48" :viewBox="glyphs[b.icon].box" v-html="glyphs[b.icon].body"></svg>
            <span v-for="(l, n) in b.lines" :key="l" class="line">{{ l }}<i v-if="b.caret === 'inline' && n === 1" class="caret wide"></i></span>
            <span v-if="b.caret === 'below'" class="line"><i class="caret wide alone"></i></span>
          </button>
        </div>
        <div class="name">{{ g.name }}</div>
      </div>
    </section>

    <main class="work">
      <aside class="pane">
        <div class="pane-bar"></div>
        <div class="pane-tools">
          <button type="button" aria-label="菜单"><i class="caret wide"></i></button>
          <button type="button" aria-label="固定"><svg width="12" height="16" :viewBox="glyphs.pin.box" v-html="glyphs.pin.body"></svg></button>
          <button type="button" aria-label="关闭"><svg width="14" height="14" :viewBox="glyphs.cross.box" v-html="glyphs.cross.body"></svg></button>
        </div>
        <div class="pane-search">
          <input type="text" aria-label="搜索" />
          <svg class="i18" :viewBox="glyphs.searchBold.box" v-html="glyphs.searchBold.body"></svg>
          <i class="caret pale"></i>
        </div>
        <div class="strip">
          <button v-for="s in strip" :key="s" type="button" :class="s">
            <svg :viewBox="glyphs[s].box" v-html="glyphs[s].body"></svg>
          </button>
        </div>
        <h2 class="order">序</h2>
        <div class="contents">
          <div class="tree">
            <i class="dash"></i>
            <ul>
              <li v-for="(r, n) in rows" :key="n" :class="[r.kind, { sel: r.selected }]"><span>{{ r.text }}</span></li>
            </ul>
          </div>
          <div class="scroll">
            <i class="arrow-up"></i>
            <div class="track"><div class="thumb"></div></div>
            <i class="arrow-down"></i>
          </div>
        </div>
      </aside>

      <section class="view">
        <nav class="docs">
          <button class="doc on" type="button">
            <svg class="i24" :viewBox="glyphs.mapDoc.box" v-html="glyphs.mapDoc.body"></svg>
            <span>地图</span>
            <svg class="close" width="13" height="13" viewBox="0 0 14 14"><path d="M1 1l12 12M13 1L1 13" stroke="#888" stroke-width="2" /></svg>
          </button>
          <button v-for="d in docTabs" :key="d" class="doc" type="button">
            <svg class="i24" :viewBox="glyphs.sceneDoc.box" v-html="glyphs.sceneDoc.body"></svg>
            <span>{{ d }}</span>
          </button>
        </nav>
        <div class="map">
          <div class="raster">
            <div v-for="b in bands" :key="b.color" :style="{ background: b.color, flexGrow: b.share }"></div>
            <svg class="cursor" viewBox="998 970 82 66">
              <path d="M1002 976v46l11-11 10 19 10-4-9-19h15z" fill="#fff" stroke="#222" stroke-width="3" />
              <path d="M1044 1008h32v19h-32z" fill="#fff" />
              <path d="M1047 1012h26v12h-26z" fill="#fff" stroke="#111" stroke-width="3" />
            </svg>
          </div>
        </div>
        <footer class="status">
          <div class="combo">
            <select v-model="scale" aria-label="比例尺"><option>1:97,441</option></select>
            <i class="caret"></i>
          </div>
          <i class="sep"></i>
          <div class="snaps">
            <button v-for="s in statusTools" :key="s" type="button" :class="s">
              <svg :viewBox="glyphs[s].box" v-html="glyphs[s].body"></svg>
            </button>
          </div>
          <i class="sep"></i>
          <button class="coords" type="button">507,357.81东 2,745,737.50北 m
            <svg width="16" height="12" viewBox="0 0 16 12"><path d="M2 2l6 7 6-7" fill="none" stroke="#555" stroke-width="4" /></svg>
          </button>
          <div class="chosen">
            <i class="sep"></i>
            <svg class="i24" :viewBox="glyphs.selection.box" v-html="glyphs.selection.body"></svg>
            <span>所选要素: 0</span>
            <i class="sep"></i>
            <button class="pause" type="button" aria-label="暂停绘制"><i></i><i></i></button>
          </div>
        </footer>
      </section>
    </main>

    <footer class="taskbar">
      <button class="t-search" type="button" aria-label="搜索"><svg class="i26" :viewBox="glyphs.taskSearch.box" v-html="glyphs.taskSearch.body"></svg></button>
      <button class="t-view" type="button" aria-label="任务视图"><svg class="i26" :viewBox="glyphs.taskView.box" v-html="glyphs.taskView.body"></svg></button>
      <i class="grip"></i>
      <button v-for="a in apps" :key="a.icon" class="app-btn" :class="a.state" type="button" :aria-label="a.label">
        <svg class="i36" :viewBox="glyphs[a.icon].box" v-html="glyphs[a.icon].body"></svg>
      </button>
      <div class="tray">
        <div class="two"><span>46%</span><span>内存使用</span></div>
        <svg width="18" height="12" :viewBox="glyphs.chevUp.box" v-html="glyphs.chevUp.body"></svg>
        <svg width="26" height="18" :viewBox="glyphs.battery.box" v-html="glyphs.battery.body"></svg>
        <svg width="17" height="26" :viewBox="glyphs.mic.box" v-html="glyphs.mic.body"></svg>
        <svg width="24" height="22" :viewBox="glyphs.speaker.box" v-html="glyphs.speaker.body"></svg>
        <svg width="20" height="20" :viewBox="glyphs.wifi.box" v-html="glyphs.wifi.body"></svg>
        <span class="ime">中</span>
        <div class="two clock"><span>12:31 周五</span><span>2021/10/29</span><i class="dot"></i></div>
        <div class="notice">
          <svg width="27" height="26" :viewBox="glyphs.notice.box" v-html="glyphs.notice.body"></svg>
          <span class="badge">2</span>
        </div>
      </div>
    </footer>
  </div>
</template>

<style>
body { margin: 0; overflow: hidden; }
</style>

<style scoped>
.app {
  display: flex;
  flex-direction: column;
  height: 100vh;
  overflow: hidden;
  background: #f0f0f0;
  color: #444;
  font: 18px/24px "Noto Sans", "Noto Sans CJK SC", sans-serif;
}
button { border: 0; padding: 0; margin: 0; background: none; color: inherit; font: inherit; white-space: nowrap; flex: none; }
svg { display: block; flex: none; }
h1, h2, ul { margin: 0; padding: 0; font-weight: 400; list-style: none; }
.i12 { width: 12px; height: 12px; }
.i16 { width: 16px; height: 16px; }
.i18 { width: 18px; height: 18px; }
.i24 { width: 24px; height: 24px; }
.i26 { width: 26px; height: 26px; }
.i36 { width: 36px; height: 36px; }
.i48 { width: 48px; height: 48px; }
.latin { font-size: 17px; }
.caret { display: inline-block; border: solid transparent; border-width: 5px 4px 0; border-top-color: #555; flex: none; }
.caret.wide { border-width: 5px 5px 0; }
.caret.up { border-width: 0 4px 5px; border-bottom-color: #888; }
.caret.pale { border-top-color: #bbb; }
.bar { display: block; width: 8px; height: 2px; background: #555; }

.top { display: flex; height: 89px; flex: none; background: #f1f1f1; border-bottom: 1px solid #bdbdbd; }
.top-left { width: 616px; flex: none; display: flex; flex-direction: column; }
.quick { display: flex; height: 51px; padding-top: 4px; box-sizing: border-box; }
.q { display: flex; align-items: center; justify-content: center; gap: 6px; height: 45px; }
.q-save { width: 36px; }
.q-split { width: 48px; }
.q-tool { width: 46px; }
.q-zoom { width: 39px; }
.q-on { width: 30px; background: #b8d2e6; margin-left: 2px; }
.q-drop { width: 16px; }
.q-more { width: 46px; flex-direction: column; gap: 3px; }
.tabs { display: flex; height: 39px; }
.file { width: 2px; height: 37px; background: #1177c8; }
.tab-grid { flex: 1; display: grid; grid-template-columns: repeat(7, 1fr); margin: 0 4px 0 5px; }
.tab { font-size: 20px; color: #666; padding: 7px 0 0; }
.tab-grid .tab { margin: 0 3px; border: 1px solid transparent; border-bottom: 0; }
.tab-grid .tab.on { background: #f9f9f9; border-color: #b5b5b5; color: #1170b8; }
.context { width: 167px; height: 88px; flex: none; box-sizing: border-box; border-top: 7px solid #d0856d; background: #eee4e1; display: flex; flex-direction: column; align-items: center; color: #777; }
.context-name { height: 44px; line-height: 38px; }
.context-tabs { display: grid; grid-template-columns: 1fr 1fr; width: 100%; flex: 1; }
.top-right { flex: 1; min-width: 0; display: flex; flex-direction: column; }
.title-row { display: flex; height: 50px; padding-left: 258px; color: #666; }
.title { font-size: 19px; line-height: 44px; white-space: nowrap; }
.win { margin-left: auto; display: flex; height: 44px; align-items: center; gap: 55px; margin-right: -4px; }
.help { font-weight: 700; font-size: 20px; color: #333; }
.user-row { display: flex; justify-content: flex-end; height: 36px; }
.cmd { width: 300px; display: flex; align-items: center; gap: 15px; padding-left: 10px; box-sizing: border-box; background: #f9f9f9; }
.cmd input { flex: 1; min-width: 0; border: 0; background: none; padding: 2px 0 0; font: italic 18px "Noto Sans", "Noto Sans CJK SC", sans-serif; outline: 0; }
.cmd input::placeholder { color: #888; opacity: 1; }
.user { width: 140px; display: flex; align-items: center; gap: 9px; padding-left: 13px; box-sizing: border-box; color: #555; font-size: 17px; }
.person { width: 16px; height: 25px; }

.ribbon { display: flex; height: 138px; flex: none; overflow: hidden; background: #f7f7f7; border-bottom: 1px solid #bdbdbd; }
.group { flex: none; display: flex; flex-direction: column; position: relative; padding-right: 1px; }
.group::after { content: ""; position: absolute; right: 0; top: 6px; bottom: 6px; width: 1px; background: #cfcfcf; }
.body { display: flex; gap: 9px; padding: 8px 11px 0; height: 112px; box-sizing: border-box; }
.group:first-child .body { padding-left: 0; }
.small-col { width: 91px; display: flex; flex-direction: column; align-items: flex-start; gap: 10px; padding-top: 2px; }
.small-col .caret { margin-left: 8px; vertical-align: 5px; }
.small-col .latin { text-indent: -2px; }
.big { display: flex; flex-direction: column; align-items: center; }
.big .i48 { margin-bottom: 5px; }
.big .line { line-height: 23px; }
.big .line .caret { vertical-align: 4px; margin-left: 3px; }
.big .line .alone { margin-left: 0; }
.big:disabled { color: #aaa; }
.name { text-align: center; font-size: 17px; line-height: 26px; position: relative; }
.name-first { text-align: left; padding-left: 33px; }
.launch { position: absolute; right: 9px; top: 8px; }
.gallery-body { padding: 4px 11px 0 6px; }
.gallery { display: flex; box-sizing: border-box; height: 102px; border: 1px solid #a9a9a9; background: #fdfdfd; }
.g-item { width: 120px; display: flex; flex-direction: column; align-items: center; padding-top: 8px; font-size: 17px; line-height: 18px; }
.g-scroll { display: flex; flex-direction: column; width: 22px; border-left: 1px solid #a9a9a9; }
.g-scroll button { flex: 1; display: flex; flex-direction: column; align-items: center; justify-content: center; gap: 3px; }
.g-scroll button + button { border-top: 1px solid #a9a9a9; }

.work { flex: 1; min-height: 0; display: flex; gap: 9px; padding: 9px 0 10px; }
.pane { width: 459px; flex: none; box-sizing: border-box; border: 1px solid #ccc; border-left: 0; background: #f7f7f7; display: flex; flex-direction: column; overflow: hidden; }
.pane-bar { height: 6px; margin-top: 1px; background: #0d76c9; flex: none; }
.pane-tools { display: flex; justify-content: flex-end; align-items: center; gap: 14px; height: 24px; padding: 0 8px 25px 0; flex: none; }
.pane-tools .caret { border-width: 6px 6px 0; }
.pane-search { display: flex; align-items: center; gap: 12px; height: 36px; flex: none; box-sizing: border-box; border: 2px solid #919191; border-left: 0; margin-right: 5px; padding-right: 10px; background: #fff; }
.pane-search input { flex: 1; min-width: 0; border: 0; outline: 0; background: none; }
.strip { display: flex; align-items: center; width: 272px; height: 63px; flex: none; border-bottom: 2px solid #c4c4c4; overflow: hidden; }
.strip button { width: 48px; display: flex; justify-content: center; }
.strip svg { width: 36px; height: 36px; }
.strip .mapPart svg, .strip .pencil svg { width: 32px; height: 32px; }
.strip .cylinder { margin-left: -16px; }
.order { font-size: 20px; font-weight: 700; line-height: 28px; margin-top: 16px; flex: none; }
.contents { flex: 1; min-height: 0; display: flex; padding-top: 10px; }
.tree { flex: 1; overflow: hidden; }
.dash { display: block; width: 3px; height: 1px; margin: 2px 0 109px; background: #555; }
.tree li { font-size: 19px; color: #555; height: 29px; line-height: 29px; box-sizing: border-box; white-space: nowrap; text-indent: -4px; }
.tree .layer { height: 36px; line-height: 36px; font-size: 18px; }
.tree .value + .layer { margin-top: 4px; }
.tree .head { height: 32px; line-height: 32px; font-weight: 700; text-indent: -6px; color: #444; }
.tree .tail { font-weight: 700; text-indent: -2px; line-height: 22px; }
.tree .sel { border: 1px solid #2f7fae; border-left: 0; background: #c4dbed; line-height: 34px; color: #456; }
.scroll { width: 20px; padding: 0 4px 3px; box-sizing: border-box; display: flex; flex-direction: column; align-items: center; justify-content: space-between; flex: none; }
.scroll .track { flex: 1; width: 12px; margin: 4px 0; background: #dfdfdf; display: flex; flex-direction: column; }
.thumb { margin-top: 40px; height: 66%; background: #78bbe6; }
.arrow-up { border: solid transparent; border-width: 0 6px 9px; border-bottom-color: #8e8e8e; }
.arrow-down { border: solid transparent; border-width: 9px 6px 0; border-top-color: #8e8e8e; }

.view { flex: 1; min-width: 0; display: flex; flex-direction: column; border-left: 1px solid #ccc; border-bottom: 1px solid #ccc; }
.docs { display: flex; height: 34px; flex: none; background: linear-gradient(#f0f0f0 30px, #cbcbcb 30px); }
.doc { display: flex; align-items: center; gap: 8px; padding: 0 38px 1px 9px; height: 34px; box-sizing: border-box; color: #222; }
.doc.on { background: #c8c8c8; color: #888; padding: 0 10px 1px 8px; gap: 7px; width: 111px; }
.doc .close { margin-left: 7px; }
.map { flex: 1; min-height: 0; background: #fff; display: flex; align-items: center; justify-content: center; padding: 0 0 8px 35px; }
.raster { width: 408px; height: 407px; display: flex; position: relative; }
.cursor { position: absolute; left: 311px; top: 308px; width: 27px; height: 22px; }
.status { display: flex; align-items: center; height: 36px; flex: none; background: #f7f7f7; position: relative; padding-left: 8px; color: #555; }
.combo { width: 150px; height: 33px; box-sizing: border-box; border: 2px solid #a8a8a8; background: #fff; display: flex; align-items: center; padding-right: 7px; }
.combo select { appearance: none; border: 0; background: none; flex: 1; padding: 0 0 0 7px; font: 19px "Noto Sans", sans-serif; color: #555; outline: 0; }
.sep { width: 2px; height: 22px; background: #999; margin: 0 7px 0 6px; flex: none; }
.snaps { display: flex; align-items: center; gap: 4px; margin-bottom: 2px; }
.snaps button { width: 29px; height: 29px; display: flex; align-items: center; justify-content: center; }
.snaps svg { width: 24px; height: 24px; }
.snaps .snapA, .snaps .snapB { background: #a2d2f0; }
.snaps .snapA svg, .snaps .snapB svg { width: 29px; height: 29px; }
.snaps .table svg { width: 22px; height: 22px; }
.coords { display: flex; align-items: center; gap: 12px; margin: 2px auto 0; font-size: 19px; }
.chosen { display: flex; align-items: center; color: #999; font-size: 18px; white-space: nowrap; margin-right: 8px; }
.chosen span { margin: 0 4px 0 6px; }
.pause { display: flex; gap: 5px; margin-left: 5px; }
.pause i { width: 6px; height: 21px; background: #666; }

.taskbar { display: flex; align-items: center; height: 60px; flex: none; background: #222; color: #fff; overflow: hidden; }
.t-search { width: 71px; }
.t-view { width: 58px; }
.grip { width: 3px; height: 36px; border: solid #555; border-width: 0 1px; margin-right: 16px; }
.app-btn { width: 73px; height: 60px; margin: 0 1px; display: flex; align-items: center; justify-content: center; position: relative; }
.app-btn::after { content: ""; position: absolute; left: 6px; right: 6px; bottom: 0; height: 3px; background: #79b7e3; }
.app-btn.idle::after { display: none; }
.app-btn.stacked::after { background: linear-gradient(90deg, #79b7e3 47px, #4a7697 47px); }
.app-btn.active { background: #505050; }
.app-btn.active::after { left: 0; right: 0; }
.tray { margin-left: auto; display: flex; align-items: center; gap: 15px; height: 60px; }
.two { display: flex; flex-direction: column; align-items: center; line-height: 24px; font-size: 18px; white-space: nowrap; position: relative; margin-right: 12px; }
.tray .clock { margin: 0 8px 0 -4px; font-size: 19px; }
.ime { font-size: 20px; font-weight: 500; }
.dot { position: absolute; right: -4px; top: -3px; width: 6px; height: 6px; border-radius: 50%; background: #e0202c; }
.notice { position: relative; width: 27px; overflow: hidden; height: 60px; display: flex; align-items: center; }
.badge { position: absolute; left: 15px; top: 30px; width: 16px; height: 20px; padding-left: 5px; box-sizing: border-box; border-radius: 3px; background: #e00b0b; font-size: 13px; line-height: 20px; }
</style>
